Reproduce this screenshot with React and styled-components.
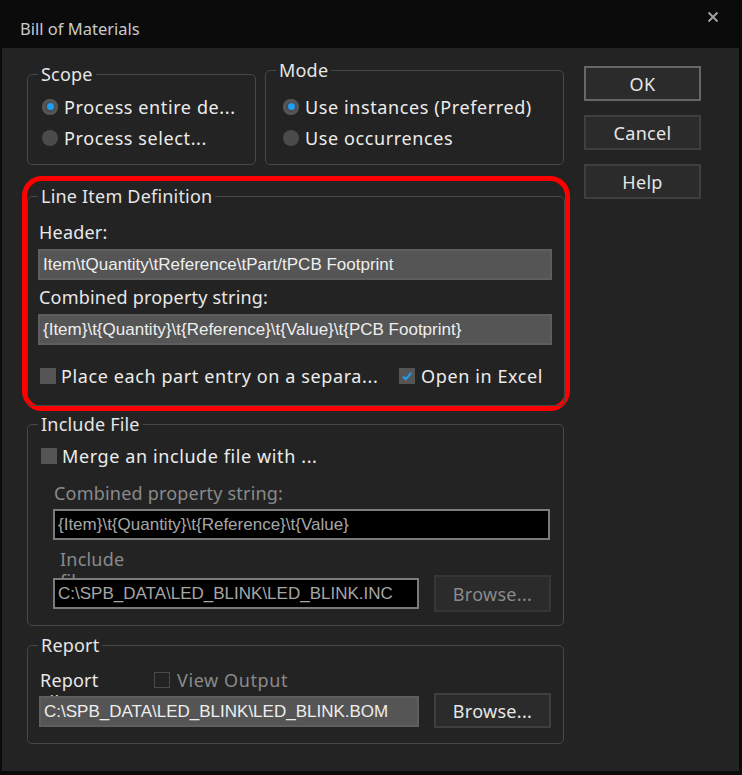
import React from 'react';
import styled, { createGlobalStyle } from 'styled-components';

const GlobalStyle = createGlobalStyle`
  html, body {
    margin: 0;
    padding: 0;
    background: #0b0b0b;
  }
  * {
    box-sizing: border-box;
  }
`;

const UI_FONT = `"Noto Sans", "Noto Sans CJK KR", sans-serif`;
const FIELD_FONT = `"Liberation Sans", Arial, sans-serif`;

const Window = styled.div`
  width: 742px;
  height: 775px;
  background: #0b0b0b;
  display: flex;
  flex-direction: column;
  font-family: ${UI_FONT};
  color: #e4e4e4;
  overflow: hidden;
`;

const TitleBar = styled.div`
  height: 48px;
  flex: none;
  display: flex;
  align-items: center;
  justify-content: space-between;
  padding: 8px 23px 0 20px;
`;

const Title = styled.div`
  font-size: 16.5px;
  color: #c9c9c9;
`;

const CloseIcon = styled.svg`
  width: 12px;
  height: 12px;
  align-self: flex-start;
  margin-top: 3px;
`;

const Body = styled.div`
  height: 723px;
  margin: 0 3px 0 2px;
  background: #232323;
  display: flex;
  align-items: flex-start;
  padding: 12px 0 0 25px;
  gap: 20px;
`;

const MainColumn = styled.div`
  width: 537px;
  display: flex;
  flex-direction: column;
`;

const TopRow = styled.div`
  display: flex;
  align-items: flex-end;
  gap: 9px;
`;

const Fieldset = styled.fieldset`
  margin: ${p => p.$mt || 0}px 0 0 0;
  padding: 0;
  border: 1px solid #474747;
  border-radius: 5px;
  width: ${p => (p.$w ? `${p.$w}px` : 'auto')};
  height: ${p => (p.$h ? `${p.$h}px` : 'auto')};
  min-width: 0;
`;

const Legend = styled.legend`
  margin-left: 10px;
  padding: 0 3px;
  font-size: 18px;
  line-height: 20px;
  letter-spacing: 0.2px;
  color: #e6e6e6;
`;

const GroupInner = styled.div`
  padding: ${p => p.$pad};
  display: flex;
  flex-direction: column;
`;

const Highlight = styled.div`
  margin: 11px -6px 0 -5px;
  border: 5px solid #ff0000;
  border-radius: 20px;
  padding: 5px 0 0 0;
`;

const OptionRow = styled.div`
  height: ${p => p.$h || 31}px;
  display: flex;
  align-items: center;
  gap: ${p => p.$gap || 6}px;
  font-size: 18px;
  letter-spacing: 0.6px;
  white-space: nowrap;
  color: ${p => (p.$disabled ? '#8a8a8a' : '#ececec')};
`;

const RadioDot = styled.span`
  width: 16px;
  height: 16px;
  border-radius: 50%;
  flex: none;
  background: #4b4b4b;
  display: flex;
  align-items: center;
  justify-content: center;
  box-shadow: ${p => (p.$on ? 'inset 0 0 0 3px #555' : 'none')};
  &::after {
    content: '';
    width: 7px;
    height: 7px;
    border-radius: 50%;
    background: ${p => (p.$on ? '#1ea0f2' : 'transparent')};
  }
`;

const Box = styled.span`
  width: 16px;
  height: 16px;
  flex: none;
  background: ${p => (p.$disabled ? 'transparent' : '#555')};
  border: ${p => (p.$disabled ? '1px solid #4a4a4a' : 'none')};
  display: flex;
  align-items: center;
  justify-content: center;
`;

const Label = styled.div`
  font-size: 18px;
  line-height: 22px;
  letter-spacing: 0.2px;
  height: ${p => p.$h || 22}px;
  margin: ${p => p.$m || '0'};
  overflow: hidden;
  white-space: ${p => (p.$wrap ? 'pre-line' : 'nowrap')};
  width: ${p => (p.$w ? `${p.$w}px` : 'auto')};
  flex: none;
  color: ${p => (p.$disabled ? '#8a8a8a' : '#e8e8e8')};
`;

const TextField = styled.div`
  height: 31px;
  margin: ${p => p.$m || '0'};
  width: ${p => (p.$w ? `${p.$w}px` : 'auto')};
  background: ${p => (p.$disabled ? '#000' : '#555')};
  border: 2px solid ${p => (p.$disabled ? '#7b7b7b' : '#5e5e5e')};
  color: ${p => (p.$disabled ? '#a6a6a6' : '#eeeeee')};
  font-family: ${FIELD_FONT};
  font-size: 17px;
  line-height: 27px;
  padding: 0 3px;
  white-space: nowrap;
  overflow: hidden;
`;

const FileRow = styled.div`
  display: flex;
  align-items: flex-end;
  gap: 15px;
  margin: ${p => p.$m || '0'};
`;

const FileColumn = styled.div`
  display: flex;
  flex-direction: column;
`;

const CheckRow = styled.div`
  display: flex;
  align-items: ${p => p.$align || 'center'};
  height: ${p => (p.$h ? `${p.$h}px` : 'auto')};
  margin: ${p => p.$m || '0'};
`;

const PushRight = styled.div`
  margin-left: auto;
  margin-right: ${p => p.$mr || 0}px;
`;

const ButtonColumn = styled.div`
  width: 117px;
  margin-top: 6px;
  display: flex;
  flex-direction: column;
  gap: 14px;
`;

const DialogButton = styled.div`
  height: ${p => p.$h || 35}px;
  width: ${p => (p.$w ? `${p.$w}px` : 'auto')};
  flex: none;
  background: #2b2b2b;
  border: 2px solid ${p => (p.$default ? '#666' : p.$disabled ? '#363636' : '#3f3f3f')};
  color: ${p => (p.$disabled ? '#8a8a8a' : '#e6e6e6')};
  font-size: 18px;
  letter-spacing: 0.3px;
  display: flex;
  align-items: center;
  justify-content: center;
  margin-bottom: ${p => p.$mb || 0}px;
`;

function GroupBox({ title, pad, w, h, mt, children }) {
  return (
    <Fieldset $w={w} $h={h} $mt={mt}>
      <Legend>{title}</Legend>
      <GroupInner $pad={pad}>{children}</GroupInner>
    </Fieldset>
  );
}

function Radio({ on, children }) {
  return (
    <OptionRow>
      <RadioDot $on={on} />
      <span>{children}</span>
    </OptionRow>
  );
}

function Check({ checked, disabled, children, gap, h }) {
  return (
    <OptionRow $disabled={disabled} $gap={gap} $h={h}>
      <Box $disabled={disabled}>
        {checked && (
          <svg width="12" height="12" viewBox="0 0 12 12">
            <path d="M2 6.5 L4.8 9.2 L10.2 2.8" fill="none" stroke="#1ea0f2" strokeWidth="2" />
          </svg>
        )}
      </Box>
      <span>{children}</span>
    </OptionRow>
  );
}

export default function App() {
  return (
    <Window>
      <GlobalStyle />
      <TitleBar>
        <Title>Bill of Materials</Title>
        <CloseIcon viewBox="0 0 12 12">
          <path d="M1.5 1.5 L10.5 10.5 M10.5 1.5 L1.5 10.5" stroke="#a0a0a0" strokeWidth="2" />
        </CloseIcon>
      </TitleBar>

      <Body>
        <MainColumn>
          <TopRow>
            <GroupBox title="Scope" w={229} h={101} pad="7px 0 0 14px">
              <Radio on>Process entire de...</Radio>
              <Radio>Process select...</Radio>
            </GroupBox>
            <GroupBox title="Mode" w={299} h={105} pad="11px 0 0 17px">
              <Radio on>Use instances (Preferred)</Radio>
              <Radio>Use occurrences</Radio>
            </GroupBox>
          </TopRow>

          <Highlight>
            <GroupBox title="Line Item Definition" pad="15px 12px 14px 10px">
              <Label $m="0 0 0 1px">Header:</Label>
              <TextField $m="6px 0 0 0">Item\tQuantity\tReference\tPart/tPCB Footprint</TextField>
              <Label $m="6px 0 0 1px">Combined property string:</Label>
              <TextField $m="6px 0 0 0">{'{Item}\\t{Quantity}\\t{Reference}\\t{Value}\\t{PCB Footprint}'}</TextField>
              <CheckRow $m="15px 0 0 2px">
                <Check gap={5}>Place each part entry on a separa...</Check>
                <PushRight $mr={9}>
                  <Check checked gap={6}>Open in Excel</Check>
                </PushRight>
              </CheckRow>
            </GroupBox>
          </Highlight>

          <GroupBox title="Include File" mt={3} pad="6px 13px 16px 12px">
            <CheckRow $m="0 0 0 1px">
              <Check gap={5}>Merge an include file with ...</Check>
            </CheckRow>
            <Label $disabled $m="11px 0 0 14px">Combined property string:</Label>
            <TextField $disabled $m="5px 0 0 13px">{'{Item}\\t{Quantity}\\t{Reference}\\t{Value}'}</TextField>
            <FileRow $m="8px 0 0 13px">
              <FileColumn>
                <Label $disabled $wrap $h={30} $w={100} $m="0 0 0 7px">{'Include\nfile:'}</Label>
                <TextField $disabled $w={366}>C:\SPB_DATA\LED_BLINK\LED_BLINK.INC</TextField>
              </FileColumn>
              <DialogButton $disabled $w={117} $h={37} $mb={-3}>Browse...</DialogButton>
            </FileRow>
          </GroupBox>

          <GroupBox title="Report" mt={9} pad="14px 13px 16px 11px">
            <FileRow>
              <FileColumn>
                <CheckRow $h={27} $align="flex-start">
                  <Label $wrap $h={27} $w={114} $m="0 0 0 1px">{'Report\nFile:'}</Label>
                  <Check disabled gap={7} h={22}>View Output</Check>
                </CheckRow>
                <TextField $w={380}>C:\SPB_DATA\LED_BLINK\LED_BLINK.BOM</TextField>
              </FileColumn>
              <DialogButton $w={117} $h={35} $mb={-1}>Browse...</DialogButton>
            </FileRow>
          </GroupBox>
        </MainColumn>

        <ButtonColumn>
          <DialogButton $default>OK</DialogButton>
          <DialogButton>Cancel</DialogButton>
          <DialogButton>Help</DialogButton>
        </ButtonColumn>
      </Body>
    </Window>
  );
}
